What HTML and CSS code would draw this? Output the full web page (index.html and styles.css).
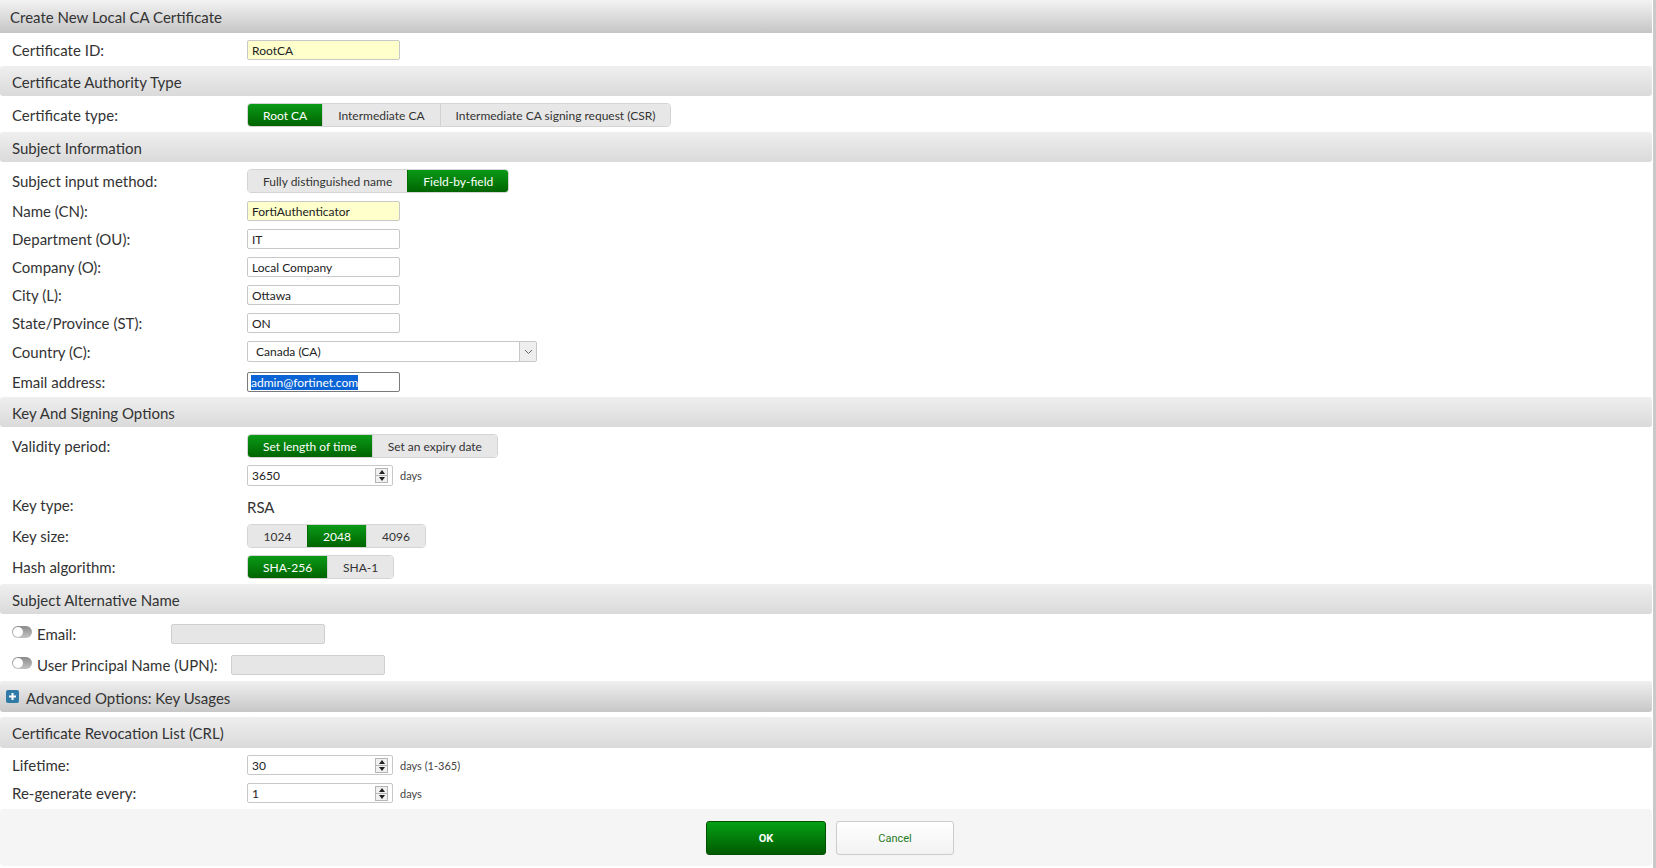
FILE: index.html
```html
<!DOCTYPE html>
<html lang="en">
<head>
    <meta charset="UTF-8">
    <title>Create New Local CA Certificate</title>
    <link rel="stylesheet" href="styles.css">
</head>
<body>
<div class="page">
    <div class="dialog-title">Create New Local CA Certificate</div>

    <div class="section-body first">
        <div class="row">
            <label class="label">Certificate ID:</label>
            <input class="field required" type="text" value="RootCA">
        </div>
    </div>

    <div class="bar">Certificate Authority Type</div>
    <div class="section-body">
        <div class="row">
            <span class="label">Certificate type:</span>
            <div class="seg">
                <button class="on">Root CA</button>
                <button>Intermediate CA</button>
                <button>Intermediate CA signing request (CSR)</button>
            </div>
        </div>
    </div>

    <div class="bar">Subject Information</div>
    <div class="section-body fields">
        <div class="row">
            <span class="label">Subject input method:</span>
            <div class="seg">
                <button>Fully distinguished name</button>
                <button class="on">Field-by-field</button>
            </div>
        </div>
        <div class="row">
            <label class="label">Name (CN):</label>
            <input class="field required" type="text" value="FortiAuthenticator">
        </div>
        <div class="row">
            <label class="label">Department (OU):</label>
            <input class="field" type="text" value="IT">
        </div>
        <div class="row">
            <label class="label">Company (O):</label>
            <input class="field" type="text" value="Local Company">
        </div>
        <div class="row">
            <label class="label">City (L):</label>
            <input class="field" type="text" value="Ottawa">
        </div>
        <div class="row">
            <label class="label">State/Province (ST):</label>
            <input class="field" type="text" value="ON">
        </div>
        <div class="row">
            <label class="label">Country (C):</label>
            <div class="select">
                <span class="select-text">Canada (CA)</span>
                <span class="select-arrow">
                    <svg width="9" height="6" viewBox="0 0 9 6"><path d="M1 1 L4.5 4.5 L8 1" fill="none" stroke="#666" stroke-width="1"/></svg>
                </span>
            </div>
        </div>
        <div class="row email-row">
            <label class="label">Email address:</label>
            <div class="field focused"><span class="sel">admin@fortinet.com</span></div>
        </div>
    </div>

    <div class="bar">Key And Signing Options</div>
    <div class="section-body key-body">
        <div class="row">
            <span class="label">Validity period:</span>
            <div class="seg">
                <button class="on">Set length of time</button>
                <button>Set an expiry date</button>
            </div>
        </div>
        <div class="row r-spin">
            <span class="label"></span>
            <div class="field number">
                <span>3650</span>
                <span class="spin"><i class="up"></i><i class="down"></i></span>
            </div>
            <span class="unit">days</span>
        </div>
        <div class="row r-keytype">
            <span class="label">Key type:</span>
            <span class="value">RSA</span>
        </div>
        <div class="row r-keysize">
            <span class="label">Key size:</span>
            <div class="seg">
                <button class="w59">1024</button>
                <button class="w59 on">2048</button>
                <button class="w59">4096</button>
            </div>
        </div>
        <div class="row r-hash">
            <span class="label">Hash algorithm:</span>
            <div class="seg">
                <button class="on">SHA-256</button>
                <button class="w66">SHA-1</button>
            </div>
        </div>
    </div>

    <div class="bar">Subject Alternative Name</div>
    <div class="section-body san-body">
        <div class="row">
            <span class="toggle"></span>
            <span class="san-label">Email:</span>
            <input class="field disabled" type="text" disabled>
        </div>
        <div class="row r-upn">
            <span class="toggle"></span>
            <span class="san-label">User Principal Name (UPN):</span>
            <input class="field disabled" type="text" disabled>
        </div>
    </div>

    <div class="bar bar-dark">
        <svg class="plus" width="13" height="13" viewBox="0 0 13 13">
            <rect x="0" y="0" width="13" height="13" rx="2" fill="#2f7aa6"/>
            <path d="M6.5 3 V10 M3 6.5 H10" stroke="#fff" stroke-width="2"/>
        </svg>
        <span>Advanced Options: Key Usages</span>
    </div>

    <div class="bar bar-crl">Certificate Revocation List (CRL)</div>
    <div class="section-body crl-body">
        <div class="row">
            <label class="label">Lifetime:</label>
            <div class="field number">
                <span>30</span>
                <span class="spin"><i class="up"></i><i class="down"></i></span>
            </div>
            <span class="unit">days (1-365)</span>
        </div>
        <div class="row">
            <label class="label">Re-generate every:</label>
            <div class="field number">
                <span>1</span>
                <span class="spin"><i class="up"></i><i class="down"></i></span>
            </div>
            <span class="unit">days</span>
        </div>
    </div>

    <div class="footer">
        <button class="btn-ok">OK</button>
        <button class="btn-cancel">Cancel</button>
    </div>
</div>
</body>
</html>
```

FILE: styles.css
```css
* {
    margin: 0;
    padding: 0;
    box-sizing: border-box;
}

body {
    background: #ffffff;
    color: #333333;
    font-family: Lato, "Open Sans", sans-serif;
    font-size: 15px;
}

.page {
    width: 1656px;
    height: 868px;
    border-right: 3px solid #c9c9c9;
    padding-right: 1px;
}

.dialog-title {
    height: 33px;
    padding-left: 10px;
    line-height: 35px;
    background: linear-gradient(#f3f3f3, #c5c5c5);
}

.bar {
    height: 30px;
    line-height: 32px;
    padding-left: 12px;
    border-radius: 3px;
    background: linear-gradient(#efefef, #dadada);
}

.bar-dark {
    height: 31px;
    padding-left: 6px;
    display: flex;
    align-items: center;
    gap: 7px;
    background: linear-gradient(#efefef, #c7c7c7);
    margin-bottom: 5px;
}

.bar-dark span {
    padding-top: 3px;
}

.bar-crl {
    height: 31px;
    line-height: 33px;
}

.section-body {
    padding: 7px 0 5px;
    display: flex;
    flex-direction: column;
}

.section-body.first {
    padding-bottom: 6px;
}

.row {
    display: flex;
    align-items: center;
}

.label {
    width: 247px;
    padding-left: 12px;
    flex-shrink: 0;
}

/* inputs */
.field {
    width: 153px;
    height: 20px;
    padding: 0 4px;
    border: 1px solid #c8c8c8;
    border-radius: 2px;
    background: #fff;
    font-family: Lato, sans-serif;
    font-size: 12px;
    color: #222;
    display: flex;
    align-items: center;
}

.field.required {
    background: #ffffcc;
}

.field.focused {
    border-color: #7a7a7a;
    padding-left: 3px;
}

.sel {
    background: #0a64d6;
    color: #fff;
    line-height: 15px;
}

.field.disabled {
    width: 154px;
    background: #e6e6e6;
    border-color: #cfcfcf;
}

.fields {
    gap: 8px;
}

.fields .email-row {
    margin-top: 2px;
}

/* segmented buttons */
.seg {
    display: flex;
    height: 24px;
    border-radius: 4px;
    overflow: hidden;
    border: 1px solid #d4d4d4;
}

.seg button {
    font-family: Lato, sans-serif;
    font-size: 12px;
    color: #333;
    padding: 0 15px;
    border: none;
    border-left: 1px solid #d2d2d2;
    background: #e7e7e7;
}

.seg button:first-child {
    border-left: none;
}

.seg button.on {
    color: #fff;
    background: linear-gradient(#0a9a17, #006400);
    border-color: #006a00;
}

.seg button.w59 {
    width: 59px;
    padding: 0;
}

.seg button.w66 {
    width: 66px;
    padding: 0;
}

/* select */
.select {
    width: 290px;
    height: 21px;
    border: 1px solid #c8c8c8;
    border-radius: 2px;
    display: flex;
    font-size: 12px;
    color: #222;
}

.select-text {
    flex: 1;
    padding-left: 8px;
    line-height: 19px;
}

.select-arrow {
    width: 17px;
    background: #eeeeee;
    border-left: 1px solid #c8c8c8;
    display: flex;
    align-items: center;
    justify-content: center;
}

/* key options */
.key-body {
    padding-bottom: 5px;
}

.key-body .r-spin {
    margin-top: 7px;
}

.field.number {
    width: 146px;
    height: 21px;
    justify-content: space-between;
    padding-right: 4px;
}

.spin {
    width: 13px;
    height: 15px;
    border: 1px solid #b5b5b5;
    background: #f0f0f0;
    display: flex;
    flex-direction: column;
}

.spin i {
    flex: 1;
    display: flex;
    align-items: center;
    justify-content: center;
}

.spin i.up {
    border-bottom: 1px solid #b5b5b5;
}

.spin i.up::after {
    content: "";
    border-left: 3px solid transparent;
    border-right: 3px solid transparent;
    border-bottom: 4px solid #222;
}

.spin i.down::after {
    content: "";
    border-left: 3px solid transparent;
    border-right: 3px solid transparent;
    border-top: 4px solid #222;
}

.unit {
    font-size: 11px;
    margin-left: 7px;
    color: #444;
}

.r-keytype {
    margin-top: 8px;
    height: 24px;
}

.r-keytype .label {
    margin-top: -3px;
}

.value {
    font-size: 15px;
    padding-top: 2px;
}

.r-keysize {
    margin-top: 6px;
}

.r-hash {
    margin-top: 7px;
}

/* subject alternative name */
.san-body {
    padding: 10px 0 6px;
}

.san-body .r-upn {
    margin-top: 11px;
}

.toggle {
    position: relative;
    width: 20px;
    height: 12px;
    margin-left: 12px;
    margin-top: -5px;
    border-radius: 6px;
    background: linear-gradient(#8a8a8a, #c4c4c4);
}

.toggle::before {
    content: "";
    position: absolute;
    left: 1px;
    top: 1px;
    width: 10px;
    height: 10px;
    border-radius: 50%;
    background: #fff;
}

.san-label {
    min-width: 120px;
    margin-left: 5px;
    margin-right: 14px;
}

/* crl */
.crl-body {
    padding: 7px 0 6px;
    gap: 8px;
}

.crl-body .field.number {
    height: 20px;
}

/* footer */
.footer {
    height: 57px;
    background: #f5f5f5;
    border-radius: 4px;
    display: flex;
    justify-content: center;
    align-items: flex-start;
    gap: 10px;
    padding: 12px 0 0 8px;
}

.btn-ok,
.btn-cancel {
    height: 34px;
    border-radius: 3px;
    font-family: Roboto, sans-serif;
    font-size: 11px;
}

.btn-ok {
    width: 120px;
    border: 1px solid #005200;
    background: linear-gradient(#05a015, #005a00);
    color: #fff;
    font-weight: bold;
}

.btn-cancel {
    width: 118px;
    border: 1px solid #cccccc;
    background: linear-gradient(#ffffff, #f2f2f2);
    color: #1f7a1f;
}
```
